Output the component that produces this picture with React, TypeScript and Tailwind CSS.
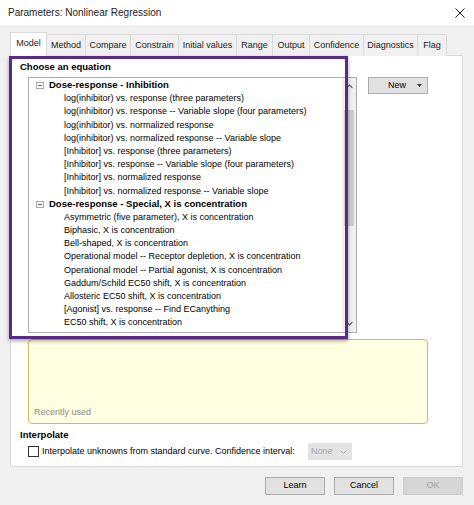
import React from 'react';

const tabs = [
  { label: 'Model', w: 'w-[37px]' },
  { label: 'Method', w: 'w-[39px]' },
  { label: 'Compare', w: 'w-[45px]' },
  { label: 'Constrain', w: 'w-[48px]' },
  { label: 'Initial values', w: 'w-[58px]' },
  { label: 'Range', w: 'w-[36px]' },
  { label: 'Output', w: 'w-[37px]' },
  { label: 'Confidence', w: 'w-[54px]' },
  { label: 'Diagnostics', w: 'w-[54px]' },
  { label: 'Flag', w: 'w-[29px]' },
];

const groups = [
  {
    title: 'Dose-response - Inhibition',
    items: [
      'log(inhibitor) vs. response (three parameters)',
      'log(inhibitor) vs. response -- Variable slope (four parameters)',
      'log(inhibitor) vs. normalized response',
      'log(inhibitor) vs. normalized response -- Variable slope',
      '[Inhibitor] vs. response (three parameters)',
      '[Inhibitor] vs. response -- Variable slope (four parameters)',
      '[Inhibitor] vs. normalized response',
      '[Inhibitor] vs. normalized response -- Variable slope',
    ],
  },
  {
    title: 'Dose-response - Special, X is concentration',
    items: [
      'Asymmetric (five parameter), X is concentration',
      'Biphasic, X is concentration',
      'Bell-shaped, X is concentration',
      'Operational model -- Receptor depletion, X is concentration',
      'Operational model -- Partial agonist, X is concentration',
      'Gaddum/Schild EC50 shift, X is concentration',
      'Allosteric EC50 shift, X is concentration',
      '[Agonist] vs. response -- Find ECanything',
      'EC50 shift, X is concentration',
      'Absolute IC50, X is concentration',
    ],
  },
];

function Chevron({ up }: { up?: boolean }) {
  return (
    <svg width="7" height="5" viewBox="0 0 7 5" className="text-[#606060]">
      <path d={up ? 'M0.5 4 L3.5 1 L6.5 4' : 'M0.5 1 L3.5 4 L6.5 1'} fill="none" stroke="currentColor" strokeWidth="1.1" />
    </svg>
  );
}

function EquationTree() {
  return (
    <div className="w-[329px] h-[256px] border border-[#abadb3] bg-white flex overflow-hidden">
      <div className="flex-1 pt-px overflow-hidden text-[9px] text-black">
        {groups.map((g) => (
          <div key={g.title}>
            <div className="h-[13.2px] flex items-center whitespace-nowrap">
              <span className="ml-[7px] w-[8px] h-[7px] border border-[#a8a8a8] flex items-center justify-center">
                <span className="w-[4px] h-px bg-[#606060]" />
              </span>
              <span className="ml-[5px] font-bold text-[9.5px]">{g.title}</span>
            </div>
            {g.items.map((it) => (
              <div key={it} className="h-[13.2px] leading-[13.2px] pl-[35px] whitespace-nowrap">
                {it}
              </div>
            ))}
          </div>
        ))}
      </div>
      <div className="w-[14px] bg-[#f0f0f0] flex flex-col items-center">
        <div className="h-[17px] flex items-center justify-center">
          <Chevron up />
        </div>
        <div className="mt-[15px] w-[10px] h-[116px] bg-[#cdcdcd]" />
        <div className="flex-1" />
        <div className="h-[17px] flex items-center justify-center">
          <Chevron />
        </div>
      </div>
    </div>
  );
}

export default function App() {
  return (
    <div className="w-[474px] h-[505px] bg-[#f0f0f0] relative overflow-hidden font-['Liberation_Sans',Arial,sans-serif] text-[#1a1a1a]">
      {/* title bar */}
      <div className="h-[25px] bg-white flex items-center justify-between pl-[8px] pr-[9px]">
        <span className="text-[10px]">Parameters: Nonlinear Regression</span>
        <svg width="10" height="10" viewBox="0 0 10 10">
          <path d="M0.5 0.5 L9.5 9.5 M9.5 0.5 L0.5 9.5" stroke="#222" strokeWidth="1" />
        </svg>
      </div>

      <div className="pl-[10px] pt-[7px]">
        {/* tabs */}
        <div className="flex items-end h-[24px]">
          {tabs.map((t, i) =>
            i === 0 ? (
              <div
                key={t.label}
                className={`${t.w} h-[24px] relative z-10 bg-white border-l border-t border-r border-[#d9d9d9] flex items-center justify-center text-[9px] pb-[2px]`}
              >
                {t.label}
              </div>
            ) : (
              <div
                key={t.label}
                className={`${t.w} h-[22px] bg-[#f0f0f0] border-t border-r border-[#d9d9d9] flex items-center justify-center text-[9px] whitespace-nowrap`}
              >
                {t.label}
              </div>
            )
          )}
        </div>

        {/* panel */}
        <div className="-mt-px w-[453px] h-[412px] bg-white border border-[#d9d9d9] pl-[9px] pt-[5px] flex flex-col">
          <div className="h-[12px] leading-[12px] font-bold text-[9.5px] text-black">Choose an equation</div>
          <div className="mt-[4px] ml-[8px] flex items-start">
            <EquationTree />
            <button className="ml-[11px] w-[60px] h-[17px] bg-[#e1e1e1] border border-[#adadad] flex items-center pl-[19px] text-[9px] text-black">
              New
              <svg width="5" height="3" viewBox="0 0 5 3" className="ml-[11px]">
                <path d="M0 0 L5 0 L2.5 3 Z" fill="#333" />
              </svg>
            </button>
          </div>

          <div className="mt-[6px] ml-[8px] w-[400px] h-[85px] bg-[#ffffe1] border border-[#c9bc6a] rounded-[4px] flex flex-col justify-end pl-[5px] pb-[4px]">
            <span className="text-[9px] text-[#8a8a8a]">Recently used</span>
          </div>

          <div className="mt-[5px] h-[12px] leading-[12px] font-bold text-[9.5px] text-black">Interpolate</div>
          <div className="mt-[2px] ml-[8px] h-[17px] flex items-center text-[9px] text-black">
            <span className="w-[11px] h-[11px] border border-[#333] bg-white" />
            <span className="ml-[3px]">Interpolate unknowns from standard curve. Confidence interval:</span>
            <div className="ml-auto mr-[110px] w-[44px] h-[17px] bg-[#e3e3e3] flex items-center justify-between pl-[3px] pr-[5px] text-[#a6a6a6]">
              None
              <svg width="7" height="4" viewBox="0 0 7 4">
                <path d="M0.5 0.5 L3.5 3.5 L6.5 0.5" fill="none" stroke="#b0b0b0" strokeWidth="1" />
              </svg>
            </div>
          </div>
        </div>
      </div>

      {/* bottom buttons */}
      <div className="mt-[10px] pr-[11px] flex justify-end gap-[9px] text-[9px]">
        <button className="w-[60px] h-[18px] bg-[#e1e1e1] border border-[#adadad] text-black">Learn</button>
        <button className="w-[60px] h-[18px] bg-[#e1e1e1] border border-[#adadad] text-black">Cancel</button>
        <button className="w-[60px] h-[18px] bg-[#d6d6d6] border border-[#cdcdcd] text-[#a3a3a3]">OK</button>
      </div>

      {/* annotation highlight over the equation list */}
      <div className="absolute left-[9px] top-[56px] w-[339px] h-[283px] border-[3px] border-[#5b2a86] shadow-[0_2px_4px_rgba(0,0,0,0.35)] pointer-events-none" />
    </div>
  );
}
